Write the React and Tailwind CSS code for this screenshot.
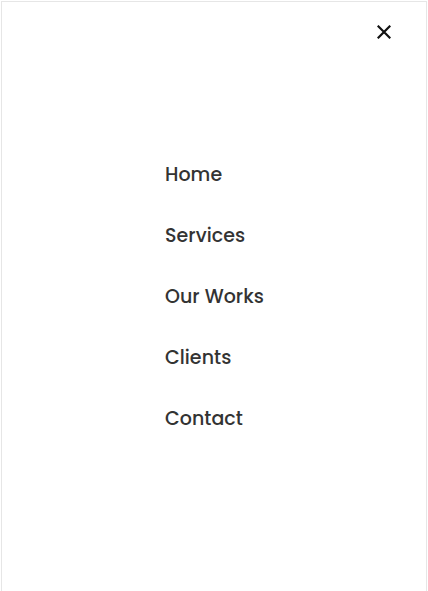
import React from 'react';

const links = ['Home', 'Services', 'Our Works', 'Clients', 'Contact'];

export default function App() {
  return (
    <div className="min-h-[591px] bg-white px-px pt-px">
      <div
        className="min-h-[600px] border-x border-t border-[#e6e6e6] bg-white"
        style={{ fontFamily: 'Poppins, Inter, "Noto Sans", sans-serif' }}
      >
        <div className="flex justify-end pt-[23px] pr-[35px]">
          <button className="block" aria-label="Close menu">
            <svg width="14" height="14" viewBox="0 0 14 14" fill="none" stroke="#111" strokeWidth="2.2" strokeLinecap="square">
              <path d="M1.5 1.5 L12.5 12.5 M12.5 1.5 L1.5 12.5" />
            </svg>
          </button>
        </div>
        <nav className="mx-auto mt-[122px] w-[98px]">
          <ul className="flex flex-col gap-[34px]">
            {links.map((l) => (
              <li key={l}>
                <a href="#" className="block whitespace-nowrap text-[19px] leading-[27px] font-medium tracking-[0.05px] text-[#333333]">
                  {l}
                </a>
              </li>
            ))}
          </ul>
        </nav>
      </div>
    </div>
  );
}
